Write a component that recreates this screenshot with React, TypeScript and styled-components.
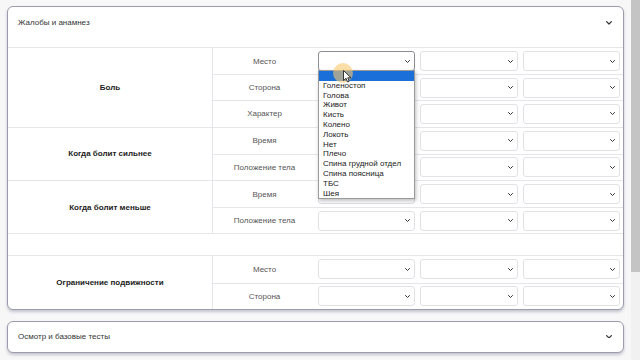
import React from "react";
import styled, { createGlobalStyle } from "styled-components";

const Global = createGlobalStyle`
  html, body { margin: 0; padding: 0; }
  body { font-family: "Liberation Sans", Arial, sans-serif; background: #f7f7f8; overflow: hidden; }
  * { box-sizing: border-box; }
`;

const Page = styled.div`
  display: flex;
  width: 640px;
  height: 360px;
  background: #f7f7f8;
`;

const Main = styled.div`
  flex: 1;
  display: flex;
  flex-direction: column;
  gap: 11px;
  padding: 6px 7px 0 7px;
`;

const ScrollTrack = styled.div`
  width: 9px;
  background: #f1f1f1;
  display: flex;
  flex-direction: column;
`;

const ScrollThumb = styled.div`
  height: 272px;
  background: #c4c4c4;
`;

const Card = styled.div`
  background: #ffffff;
  border: 1px solid #9c9cae;
  border-radius: 6px;
  box-shadow: 0 2px 3px rgba(70, 70, 100, 0.28);
`;

const CardHeader = styled.div<{ $h: number; $top: number }>`
  height: ${(p) => p.$h}px;
  display: flex;
  align-items: flex-start;
  justify-content: space-between;
  padding: ${(p) => p.$top}px 11px 0 10px;
  font-size: 8px;
  line-height: 10px;
  color: #333;
  & > svg { margin-top: 3px; }
`;

const Group = styled.div`
  display: flex;
  border-top: 1px solid #e6e6ea;
`;

const LabelCell = styled.div`
  width: 205px;
  flex: none;
  border-right: 1px solid #e6e6ea;
  display: flex;
  align-items: center;
  justify-content: center;
  font-size: 8px;
  font-weight: bold;
  color: #222;
`;

const SubRows = styled.div`
  flex: 1;
  display: flex;
  flex-direction: column;
`;

const SubRow = styled.div`
  height: 26.2px;
  display: grid;
  grid-template-columns: 103px repeat(3, 1fr);
  align-items: center;
  & + & { border-top: 1px solid #e6e6ea; }
`;

const SubLabel = styled.div`
  text-align: center;
  font-size: 8px;
  color: #555;
`;

const SelectCell = styled.div`
  padding: 0 3px 0 2px;
  position: relative;
`;

const SelectBox = styled.div<{ $focus?: boolean }>`
  height: 20px;
  border: 1px solid ${(p) => (p.$focus ? "#8d8d96" : "#e2e2e6")};
  border-radius: 3px;
  background: #fff;
  display: flex;
  align-items: center;
  justify-content: flex-end;
  padding-right: 4px;
`;

const EmptyRow = styled.div`
  height: 22px;
  border-top: 1px solid #e6e6ea;
`;

const ListBox = styled.div`
  position: absolute;
  left: 2px;
  right: 3px;
  top: 19px;
  background: #fff;
  border: 1px solid #9a9a9a;
  box-shadow: 1px 2px 4px rgba(0, 0, 0, 0.25);
  z-index: 10;
  display: flex;
  flex-direction: column;
`;

const Option = styled.div<{ $active?: boolean }>`
  height: 9.8px;
  line-height: 9.8px;
  font-size: 8px;
  padding-left: 4px;
  color: #222;
  background: ${(p) => (p.$active ? "#1a6fd8" : "transparent")};
  white-space: nowrap;
`;

const Halo = styled.div`
  position: absolute;
  left: 17px;
  top: 12px;
  width: 20px;
  height: 20px;
  border-radius: 50%;
  background: rgba(250, 200, 110, 0.6);
  z-index: 11;
`;

const CursorIcon = styled.svg`
  position: absolute;
  left: 27px;
  top: 19px;
  z-index: 12;
`;

const Chevron = ({ w = 6 }: { w?: number }) => (
  <svg width={w} height={w * 0.6} viewBox="0 0 10 6">
    <path d="M1 1 L5 5 L9 1" fill="none" stroke="#333" strokeWidth="2" strokeLinecap="round" strokeLinejoin="round" />
  </svg>
);

const options = [
  "",
  "Голеностоп",
  "Голова",
  "Живот",
  "Кисть",
  "Колено",
  "Локоть",
  "Нет",
  "Плечо",
  "Спина грудной отдел",
  "Спина поясница",
  "ТБС",
  "Шея",
];

const Select = ({ open }: { open?: boolean }) => (
  <SelectCell>
    <SelectBox $focus={open}>
      <Chevron w={5} />
    </SelectBox>
    {open && (
      <>
        <ListBox>
          {options.map((o, i) => (
            <Option key={i} $active={i === 0}>
              {o}
            </Option>
          ))}
        </ListBox>
        <Halo />
        <CursorIcon width="9" height="13" viewBox="0 0 9 13">
          <path d="M0.5 0.5 L0.5 10.5 L3 8.3 L4.6 12 L6.2 11.3 L4.7 7.8 L8 7.8 Z" fill="#fff" stroke="#222" strokeWidth="0.9" strokeLinejoin="round" />
        </CursorIcon>
      </>
    )}
  </SelectCell>
);

type GroupDef = { label: string; rows: string[] };

const groups: GroupDef[] = [
  { label: "Боль", rows: ["Место", "Сторона", "Характер"] },
  { label: "Когда болит сильнее", rows: ["Время", "Положение тела"] },
  { label: "Когда болит меньше", rows: ["Время", "Положение тела"] },
];

const lastGroup: GroupDef = { label: "Ограничение подвижности", rows: ["Место", "Сторона"] };

const GroupView = ({ g, gi }: { g: GroupDef; gi: number }) => (
  <Group>
    <LabelCell>{g.label}</LabelCell>
    <SubRows>
      {g.rows.map((r, ri) => (
        <SubRow key={ri}>
          <SubLabel>{r}</SubLabel>
          <Select open={gi === 0 && ri === 0} />
          <Select />
          <Select />
        </SubRow>
      ))}
    </SubRows>
  </Group>
);

export default function App() {
  return (
    <Page>
      <Global />
      <Main>
        <Card>
          <CardHeader $h={40} $top={11}>
            <span>Жалобы и анамнез</span>
            <Chevron w={6} />
          </CardHeader>
          {groups.map((g, gi) => (
            <GroupView key={gi} g={g} gi={gi} />
          ))}
          <EmptyRow />
          <GroupView g={lastGroup} gi={99} />
        </Card>
        <Card>
          <CardHeader $h={30} $top={10}>
            <span>Осмотр и базовые тесты</span>
            <Chevron w={6} />
          </CardHeader>
        </Card>
      </Main>
      <ScrollTrack>
        <ScrollThumb />
      </ScrollTrack>
    </Page>
  );
}
